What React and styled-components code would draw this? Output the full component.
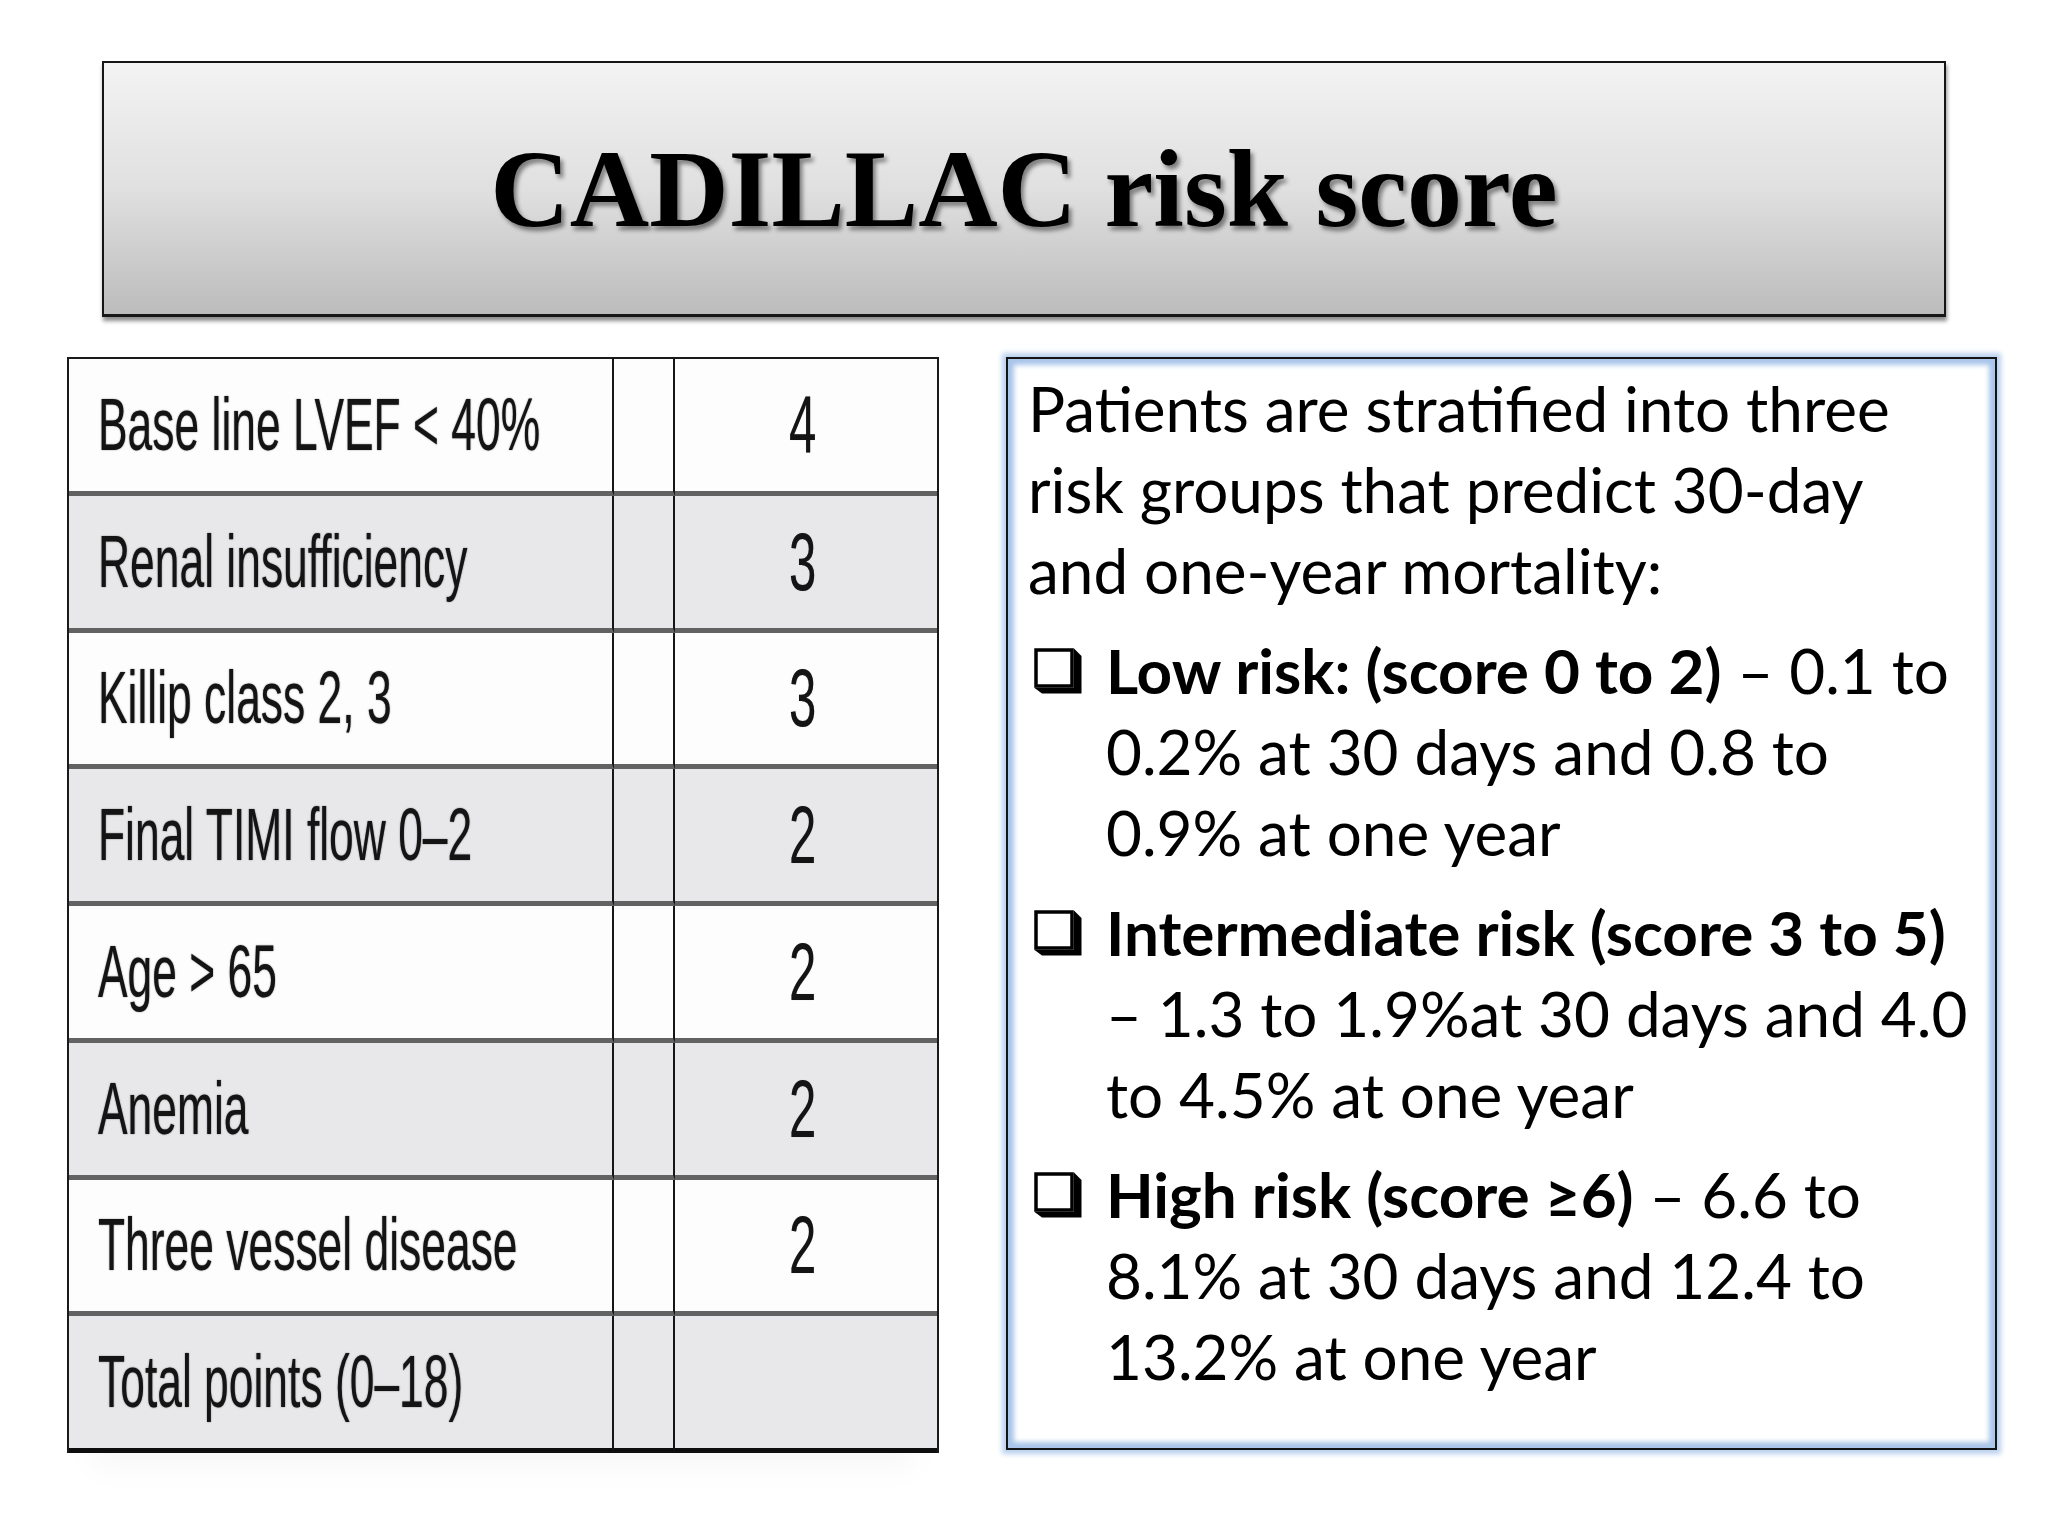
import React from 'react'
import styled, { createGlobalStyle } from 'styled-components'

const GlobalStyle = createGlobalStyle`
    body {
        margin: 0;
        background: #ffffff;
    }
`

const Slide = styled.div`
    width: 2048px;
    height: 1536px;
    box-sizing: border-box;
    padding-top: 61px;
    overflow: hidden;
`

const TitleBar = styled.div`
    margin-left: 102px;
    width: 1844px;
    height: 256px;
    box-sizing: border-box;
    border: 2px solid #161616;
    border-bottom-width: 3px;
    background: linear-gradient(to bottom, #f3f3f3 0%, #e0e0e0 50%, #bcbcbc 100%);
    box-shadow: 1px 4px 4px rgba(0, 0, 0, 0.45);
    display: flex;
    align-items: center;
    justify-content: center;
`

const Title = styled.h1`
    margin: 0;
    font-family: "Liberation Serif", "Times New Roman", serif;
    font-weight: 700;
    font-size: 110px;
    line-height: 1;
    color: #000;
    text-shadow: 3px 4px 4px rgba(0, 0, 0, 0.45);
`

const Content = styled.div`
    display: flex;
    align-items: flex-start;
    gap: 67px;
    margin-top: 40px;
    padding-left: 67px;
`

const Table = styled.div`
    width: 872px;
    box-sizing: border-box;
    border: 2px solid #1a1a1a;
    border-bottom: none;
    display: flex;
    flex-direction: column;
    box-shadow: 0 40px 30px -24px rgba(0, 0, 0, 0.03);
`

const Row = styled.div`
    display: grid;
    grid-template-columns: 545px 61px 1fr;
    height: 136.75px;
    background: ${p => (p.$shade ? '#e8e8ea' : '#fdfdfd')};
`

const Cell = styled.div`
    display: flex;
    align-items: center;
    justify-content: ${p => (p.$center ? 'center' : 'flex-start')};
    padding-left: ${p => (p.$center ? 0 : 29)}px;
    box-sizing: border-box;
    border-right: ${p => (p.$edge ? '2px solid #161616' : 'none')};
    border-bottom: 5px solid ${p => (p.$last ? '#0e0e0e' : '#626262')};
    overflow: hidden;
`

const Label = styled.span`
    font-family: "Liberation Sans", Arial, sans-serif;
    font-size: 74px;
    line-height: 1;
    color: #141414;
    white-space: nowrap;
    transform: scaleX(0.6);
    transform-origin: left center;
    text-shadow: 0 0 2px rgba(0, 0, 0, 0.55);
`

const Points = styled(Label)`
    font-size: 82px;
    color: #141414;
    transform: scaleX(0.6);
    transform-origin: center;
    margin-left: -6px;
    text-shadow: 0 0 1px rgba(0, 0, 0, 0.35);
`

const RiskBox = styled.div`
    width: 991px;
    height: 1093px;
    box-sizing: border-box;
    border: 2px solid #141414;
    background: #ffffff;
    box-shadow: 0 0 5px 4px #b9d1ef, inset 0 0 5px 6px #a9c5ea;
    padding: 9px 20px 0 20px;
    font-family: Lato, "Open Sans", sans-serif;
    font-size: 62px;
    line-height: 81px;
    color: #000;
`

const Line = styled.span`
    display: block;
    white-space: nowrap;
`

const Item = styled.div`
    display: flex;
    align-items: flex-start;
    margin-top: 19px;
`

const ItemText = styled.div`
    flex: 1;
`

const Strong = styled.b`
    font-weight: 700;
`

const CheckWrap = styled.span`
    flex: none;
    width: 48px;
    height: 46px;
    margin: 0 24px 0 6px;
    display: block;
`

const CheckBox = () =>
    <CheckWrap>
        <svg width="48" height="46" viewBox="0 0 48 46">
            <rect x="2" y="2" width="36" height="36" fill="#fff" stroke="#000" strokeWidth="3.5" />
            <path d="M39.75 0.25 L47.5 8 L47.5 45.5 L8 45.5 L0.25 39.75 L39.75 39.75 Z" fill="#000" />
        </svg>
    </CheckWrap>

const rows = [
    ['Base line LVEF < 40%', '4'],
    ['Renal insufficiency', '3'],
    ['Killip class 2, 3', '3'],
    ['Final TIMI flow 0–2', '2'],
    ['Age > 65', '2'],
    ['Anemia', '2'],
    ['Three vessel disease', '2'],
    ['Total points (0–18)', '']
]

const App = () =>
    <Slide>
        <GlobalStyle />
        <TitleBar>
            <Title>CADILLAC risk score</Title>
        </TitleBar>
        <Content>
            <Table>
                {rows.map(([label, pts], i) => {
                    const last = i === rows.length - 1
                    return <Row key={label} $shade={i % 2 === 1}>
                        <Cell $edge $last={last}><Label>{label}</Label></Cell>
                        <Cell $edge $center $last={last} />
                        <Cell $center $last={last}><Points>{pts}</Points></Cell>
                    </Row>
                })}
            </Table>
            <RiskBox>
                <Line>Patients are stratified into three</Line>
                <Line>risk groups that predict 30-day</Line>
                <Line>and one-year mortality:</Line>
                <Item>
                    <CheckBox />
                    <ItemText>
                        <Line><Strong>Low risk: (score 0 to 2)</Strong> – 0.1 to</Line>
                        <Line>0.2% at 30 days and 0.8 to</Line>
                        <Line>0.9% at one year</Line>
                    </ItemText>
                </Item>
                <Item>
                    <CheckBox />
                    <ItemText>
                        <Line><Strong>Intermediate risk (score 3 to 5)</Strong></Line>
                        <Line>– 1.3 to 1.9%at 30 days and 4.0</Line>
                        <Line>to 4.5% at one year</Line>
                    </ItemText>
                </Item>
                <Item>
                    <CheckBox />
                    <ItemText>
                        <Line><Strong>High risk (score ≥6)</Strong> – 6.6 to</Line>
                        <Line>8.1% at 30 days and 12.4 to</Line>
                        <Line>13.2% at one year</Line>
                    </ItemText>
                </Item>
            </RiskBox>
        </Content>
    </Slide>

export default App
